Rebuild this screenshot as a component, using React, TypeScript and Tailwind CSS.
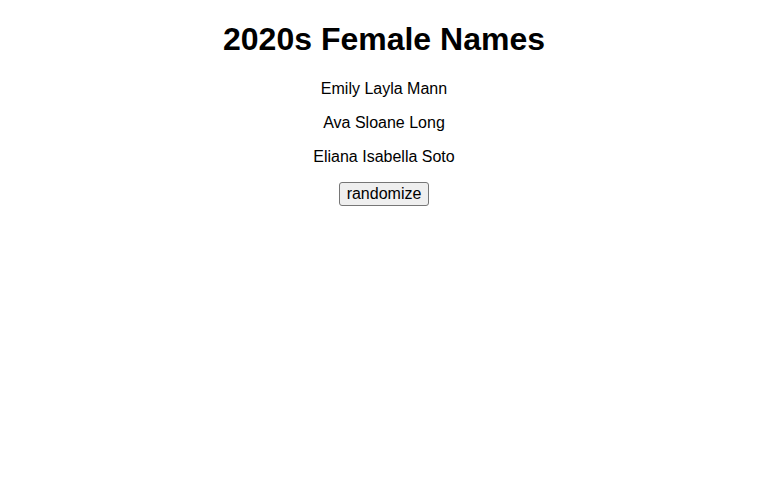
import { useState } from "react"

const names = ["Emily Layla Mann", "Ava Sloane Long", "Eliana Isabella Soto"]

export default function App() {
  const [list] = useState(names)

  return (
    <div className="min-h-[480px] w-full bg-white text-black font-['Liberation_Sans',Arial,sans-serif] flex flex-col items-center">
      {/* Heading */}
      <h1 className="mt-[21px] text-[32px] leading-[37px] font-bold">2020s Female Names</h1>

      {/* Names */}
      <div className="mt-[22px] flex flex-col items-center gap-4">
        {list.map((name) => (
          <p key={name} className="text-base leading-[18px]">
            {name}
          </p>
        ))}
      </div>

      <button className="mt-[16px] px-[7px] py-[2px] text-base leading-[18px] bg-[#efefef] border border-[#767676] rounded-[3px]">
        randomize
      </button>
    </div>
  )
}
